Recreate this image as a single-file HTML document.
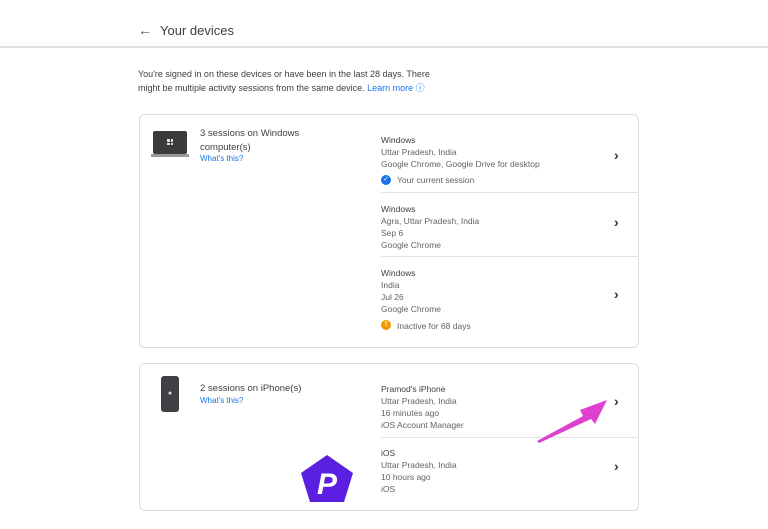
<!DOCTYPE html>
<html><head><style>
*{margin:0;padding:0;box-sizing:border-box}
body{width:768px;height:529px;background:#fff;font-family:"Liberation Sans",sans-serif;position:relative;overflow:hidden;color:#3c4043}
.a{position:absolute;white-space:nowrap}
.card{position:absolute;left:139px;width:500px;border:1px solid #dadce0;border-radius:6px;background:#fff}
.t{font-size:8.5px;color:#5f6368;line-height:12px}
.h{font-size:8.5px;color:#3c4043;line-height:12px}
.div{position:absolute;left:381px;width:258px;height:1px;background:#e3e3e3}
.chev{position:absolute;font-size:14px;color:#333;font-weight:bold}
</style></head><body>
<div class="a" style="left:138px;top:22px;font-size:14px;color:#555">←</div>
<div class="a" style="left:160px;top:23px;font-size:13px;color:#3c4043">Your devices</div>
<div class="a" style="left:0;top:46px;width:768px;height:2px;background:#e0e0e0"></div>
<div class="a" style="left:138px;top:67px;font-size:9px;line-height:14px;color:#3c4043">You're signed in on these devices or have been in the last 28 days. There<br>might be multiple activity sessions from the same device. <span style="color:#1a73e8">Learn more ⓘ</span></div>

<div class="card" style="top:114px;height:234px"></div>
<div class="a" style="left:153px;top:131px;width:34px;height:23px;background:#3a3b3d;border-radius:2px"></div>
<div class="a" style="left:151px;top:154px;width:38px;height:3px;background:#999"></div>
<div class="a" style="left:167px;top:139px;width:6px;height:6px;background:linear-gradient(#3a3b3d,#3a3b3d) center/100% 1px no-repeat,linear-gradient(#3a3b3d,#3a3b3d) center/1px 100% no-repeat,#ddd"></div>
<div class="a" style="left:200px;top:127px;font-size:9.5px;line-height:14px;color:#3c4043">3 sessions on Windows<br>computer(s)</div>
<div class="a" style="left:200px;top:154px;font-size:8px;color:#1a73e8">What's this?</div>

<div class="a h" style="left:381px;top:134px">Windows</div>
<div class="a t" style="left:381px;top:146px">Uttar Pradesh, India</div>
<div class="a t" style="left:381px;top:158px">Google Chrome, Google Drive for desktop</div>
<div class="a" style="left:381px;top:175px;width:10px;height:10px;border-radius:50%;background:#1a73e8;color:#fff;font-size:7px;text-align:center;line-height:10px">✓</div>
<div class="a t" style="left:397px;top:174px">Your current session</div>
<div class="chev" style="left:614px;top:147px">›</div>
<div class="div" style="top:192px"></div>
<div class="a h" style="left:381px;top:203px">Windows</div>
<div class="a t" style="left:381px;top:215px">Agra, Uttar Pradesh, India</div>
<div class="a t" style="left:381px;top:227px">Sep 6</div>
<div class="a t" style="left:381px;top:239px">Google Chrome</div>
<div class="chev" style="left:614px;top:214px">›</div>
<div class="div" style="top:256px"></div>
<div class="a h" style="left:381px;top:267px">Windows</div>
<div class="a t" style="left:381px;top:279px">India</div>
<div class="a t" style="left:381px;top:291px">Jul 26</div>
<div class="a t" style="left:381px;top:303px">Google Chrome</div>
<div class="a" style="left:381px;top:320px;width:10px;height:10px;border-radius:50%;background:#f29900;color:#fff;font-size:7px;text-align:center;line-height:10px;font-weight:bold">!</div>
<div class="a t" style="left:397px;top:320px">Inactive for 68 days</div>
<div class="chev" style="left:614px;top:286px">›</div>

<div class="card" style="top:363px;height:148px"></div>
<div class="a" style="left:161px;top:376px;width:18px;height:36px;background:#3f4043;border-radius:3px;color:#ddd;font-size:7px;text-align:center;line-height:36px">●</div>
<div class="a" style="left:200px;top:383px;font-size:9.5px;color:#3c4043">2 sessions on iPhone(s)</div>
<div class="a" style="left:200px;top:396px;font-size:8px;color:#1a73e8">What's this?</div>
<div class="a h" style="left:381px;top:383px">Pramod's iPhone</div>
<div class="a t" style="left:381px;top:395px">Uttar Pradesh, India</div>
<div class="a t" style="left:381px;top:407px">16 minutes ago</div>
<div class="a t" style="left:381px;top:419px">iOS Account Manager</div>
<div class="chev" style="left:614px;top:393px">›</div>
<div class="div" style="top:437px"></div>
<div class="a h" style="left:381px;top:447px">iOS</div>
<div class="a t" style="left:381px;top:459px">Uttar Pradesh, India</div>
<div class="a t" style="left:381px;top:471px">10 hours ago</div>
<div class="a t" style="left:381px;top:483px">iOS</div>
<div class="chev" style="left:614px;top:458px">›</div>

<svg class="a" style="left:300px;top:454px" width="54" height="48" viewBox="0 0 54 48"><polygon points="27,1 53,19 44,48 10,48 1,19" fill="#5a1fe0"/><text x="27" y="40" text-anchor="middle" font-family="Liberation Sans" font-weight="bold" font-style="italic" font-size="30" fill="#fff">P</text></svg>
<svg class="a" style="left:535px;top:396px" width="75" height="48" viewBox="0 0 75 48"><polygon points="2,45 48,20 45,14 72,4 60,28 56,23 4,47" fill="#e040d0"/></svg>
</body></html>
